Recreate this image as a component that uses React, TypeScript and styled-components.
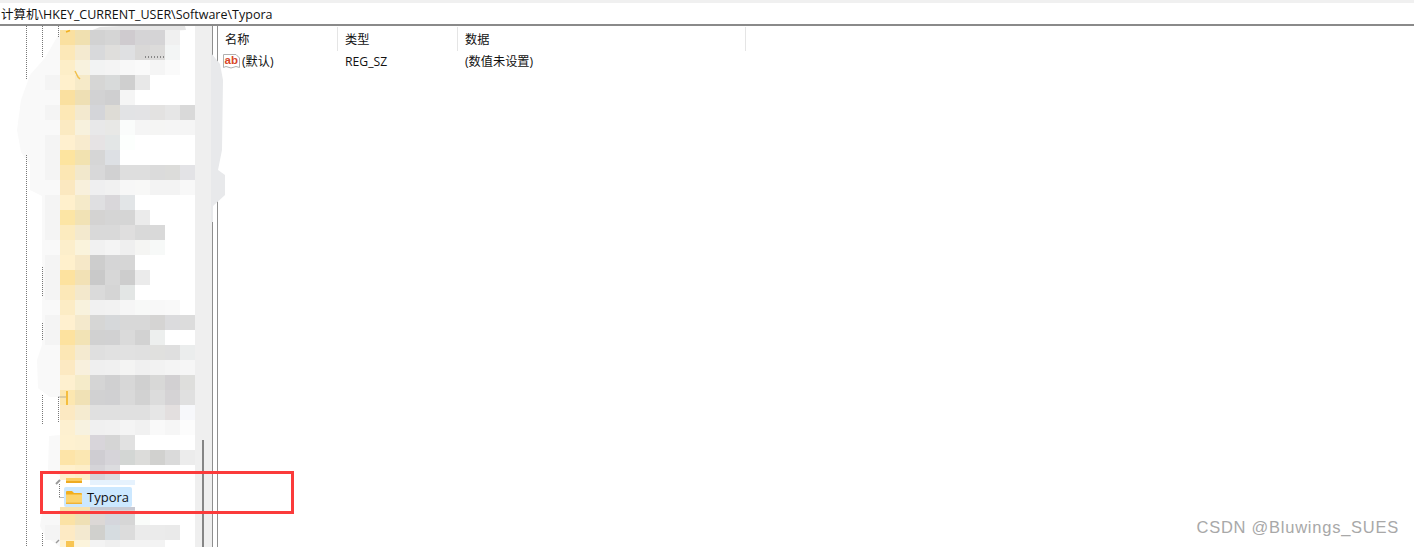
import React from "react";
import styled, { createGlobalStyle } from "styled-components";

const UI_FONT = `"Open Sans", "Noto Sans CJK SC", "Liberation Sans", sans-serif`;

const GlobalStyle = createGlobalStyle`
  html, body { margin: 0; padding: 0; background: #fff; }
  #root { width: 1414px; height: 547px; overflow: hidden; }
`;

const Page = styled.div`
  position: relative;
  display: flex;
  flex-direction: column;
  width: 1414px;
  height: 547px;
  overflow: hidden;
  background: #fff;
  font-family: ${UI_FONT};
  color: #111;
`;

const TopStrip = styled.div`
  flex: 0 0 3px;
  background: #f0f0f0;
`;

const AddressBar = styled.div`
  flex: 0 0 23px;
  box-sizing: border-box;
  display: flex;
  align-items: center;
  padding-left: 1px;
  font-size: 12.5px;
  white-space: nowrap;
  border-bottom: 2px solid #8a8a8a;
`;

const Body = styled.div`
  flex: 1;
  display: flex;
  min-height: 0;
`;

const TreePane = styled.div`
  position: relative;
  z-index: 1;
  flex: 0 0 212px;
  width: 212px;
  min-width: 0;
  background: #fff;
`;

const MosaicDrawing = styled.svg`
  display: block;
  overflow: visible;
`;

const TreeSelection = styled.div`
  position: absolute;
  left: 64px;
  top: 461px;
  width: 68px;
  height: 20px;
  display: flex;
  align-items: center;
  gap: 5px;
  padding-left: 2px;
  box-sizing: border-box;
  background: #cce8ff;
  border-radius: 2px;
  font-size: 13px;
  line-height: 18px;
`;

const SelectionLabel = styled.span`
  margin-top: -1px;
`;

const Splitter = styled.div`
  flex: 0 0 6px;
  box-sizing: border-box;
  border-left: 1.5px solid #8f8f8f;
  border-right: 1.5px solid #8f8f8f;
`;

const ListPane = styled.div`
  flex: 1;
  min-width: 0;
  font-size: 12.2px;
`;

const ColumnsGrid = styled.div`
  display: grid;
  grid-template-columns: 120px 120px 288px;
  justify-content: start;
`;

const HeaderCell = styled.div`
  height: 24px;
  margin-top: 1px;
  padding-left: 7px;
  display: flex;
  align-items: center;
  box-sizing: border-box;
  border-right: 1px solid #e5e5e5;
`;

const DataCell = styled.div<{ $tight?: boolean }>`
  height: 20px;
  display: flex;
  align-items: center;
  gap: 2px;
  padding-left: ${(p) => (p.$tight ? 5 : 7)}px;
`;

const RedBox = styled.div`
  position: absolute;
  left: 40px;
  top: 471px;
  width: 254px;
  height: 43px;
  box-sizing: border-box;
  border: 3px solid #fb3b3b;
  z-index: 2;
`;

const Watermark = styled.div`
  position: absolute;
  right: 15px;
  top: 518px;
  font-family: "Liberation Sans", sans-serif;
  font-size: 16.5px;
  letter-spacing: 0.75px;
  line-height: 18px;
  color: #a8a8a8;
  white-space: nowrap;
  z-index: 2;
`;

type MosaicRow = [number, string[]];

const ROWS: MosaicRow[] = [
  [30, ["#fae0a0","#f0e0b0","#d2d2d2","#d5d5d5","#cfcbcf","#d5d4d6","#d5d4d6","#f0f0f0"]],
  [45, ["#fce8b8","#f4ead0","#d8d9db","#dfdedc","#dfe0e2","#d9d8d7","#dcdbda","#f3f5f5"]],
  [60, ["#fdeec8","#f8f2de","#f2f3f3","#f4f4f4","#f8f8f8","#fafafa","#f5f5f5","#fafafa"]],
  [75, ["#fff0cc","#f6eac8","#d6d6d5","#d8dada","#cfcfcf","#e8e8e8"]],
  [90, ["#fae0a0","#eedfb4","#d2d2d3","#cfcfd0","#f5f5f5"]],
  [105, ["#fde8b6","#f3e9cf","#d4d5d9","#dedcd6","#e2e3e5","#e3e3e5","#e3e2e1","#e6e6e6","#d9d9d9"]],
  [120, ["#fbeac2","#f7f1dd","#e8e8e9","#e8e8e6","#fafcfb","#f5f5f5","#f5f5f4","#f5f5f5","#f5f5f5"]],
  [135, ["#fff0cf","#f8ebce","#e6e3e4","#e3e6e6","#fcfffd"]],
  [150, ["#fde49f","#f2e2b0","#d6d6d6","#dde0e4"]],
  [165, ["#fce7b4","#f2e8cc","#d8d8d9","#d1d1d2","#dedede","#dedede","#dbdbdb","#dcdcda","#e3e3e6"]],
  [180, ["#fbe8c0","#f8f0dc","#efeff0","#f1f1f1","#f7f7f7","#f8f8f7","#f3f3f3","#f3f3f3","#f8f8f8"]],
  [195, ["#fff0cc","#f5eac9","#dfdfe1","#d9d7da","#e2e5e7"]],
  [210, ["#fce5a5","#f1e2b5","#d4d3d2","#d5d5d5","#d5d5d5","#ebebeb"]],
  [225, ["#fcebbf","#f3e9ce","#d9d9d9","#d9d9d9","#dfdede","#d9d9d9","#d9d9d9"]],
  [240, ["#fceecb","#faf3dc","#f1f1f1","#f4f4f4","#efefef","#f5f5f3","#f7f9f8"]],
  [255, ["#fff0cc","#f6e8c8","#cdcdcd","#d5d5d6","#d6d6d6"]],
  [270, ["#fde29f","#f2e1b5","#c9c9c9","#d7d7d7","#cdcdcd","#ebebeb"]],
  [285, ["#fce8b8","#f3e8cc","#dadada","#d5d5d5","#e3e6e5"]],
  [300, ["#fcecc5","#f8f2dd","#f1f1f1","#f2f2f2","#f6f6f6","#f8f9f8","#f8f8f8","#f9f9f9"]],
  [315, ["#fff0cf","#f4e9cc","#d6d6d5","#d6d8da","#d8d8d8","#d8d8d8","#d5d4d3","#dbdbdd","#dcdcdc"]],
  [330, ["#fde29f","#f2e3b5","#d1d1d1","#d1d1d2","#dadada","#d2d2d2","#edefee"]],
  [345, ["#fce7b5","#f4ead0","#dfdfdf","#e1e1e1","#e1e1e1","#e0e0e0","#e0e0de","#dfdfdf","#ebeded"]],
  [360, ["#fce9c2","#f8f0dd","#efefef","#f0f0f0","#f4f4f3","#f0f0f0","#f2f2f2","#f4f4f4","#f6f6f6"]],
  [375, ["#fef0cf","#f5ebc9","#d5d5d5","#d0d0d1","#d7d7d7","#d0d0d0","#d8d8d7","#d2d0d2","#dededc"]],
  [390, ["#fce7b0","#f0e1b5","#d1d1d2","#d0d0d2","#d9d9d9","#d2d2d2","#dcdcdc","#d5d3d5","#e0e0e0"]],
  [405, ["#fce9c2","#f5ebd0","#e0e0e0","#e0e0e0","#e0e0e0","#e0e0e0","#e6e6e6","#e3dfdf","#f7f8fb"]],
  [420, ["#fdf0d0","#f7f2e0","#f0f0f0","#f1f1f1","#f4f4f4","#f1f1f1","#f9f9f9","#f6f6f6","#fcfcfc"]],
  [435, ["#fef1d0","#fcf0d0","#d8d5da","#d5d5d5","#e1e1e1"]],
  [450, ["#fde4a8","#fbe7b2","#cfcdd2","#d6d4d9","#d3d6d4","#dcdcda","#d1d1cf","#dadada","#ececec"]],
  [465, ["#fff0cc","#fdeec8","#d5d4d8","#dcdcdf"]],
  [510, ["#fbe2a5","#efe0b5","#dcd8d6","#d5d6dc","#d6d6d6","#fafcfa"]],
  [525, ["#fdeac4","#f3e9d0","#d0d0cd","#d6dce0","#dcdcdc","#ebebeb","#ebebeb","#eaeaea"]],
  [540, ["#fff2d0","#fcf4dc","#f3f3f3","#efefef","#f3f3f3","#f3f3f3","#f3f3f3"]],
];

const LEFT_CELLS = [75, 105, 135, 150, 165, 195, 210, 225, 255, 270, 285, 315, 330, 525];

const DOTTED: [number, number, number, number][] = [
  [26.5, 26, 26.5, 80],
  [26.5, 155, 26.5, 547],
  [42.5, 26, 42.5, 58],
  [42.5, 267, 42.5, 296],
  [42.5, 323, 42.5, 340],
  [42.5, 395, 42.5, 425],
  [42.5, 533, 42.5, 547],
  [58.5, 26, 58.5, 38],
  [58.5, 397, 58.5, 422],
  [58.5, 397, 66, 397],
  [59.5, 484, 59.5, 497],
  [59.5, 497.5, 65, 497.5],
];

const Mosaic = () => (
  <MosaicDrawing width="232" height="521" viewBox="0 26 232 521">
    <rect x="195" y="26" width="17" height="521" fill="#efefef" />
    <path d="M60 32 L45 58 L30 75 L21 100 L17 130 L21 152 L30 165 L30 190 L42 196 L42 345 L37 360 L38 388 L50 397 L60 397 L60 435 L49 436 L48 470 L60 476 Z" fill="#f9f9f9" />
    <path d="M60 510 L42 514 L40 526 L45 536 L60 547 Z" fill="#f8f8f8" />
    <path d="M90 31 L100 27 L120 26 L185 26 L186 30 L165 31 L90 31 Z" fill="#e6e6e6" />
    <path d="M211 53 L220 64 L223 80 L222 150 L218 170 L225 175 L225 195 L213 206 L213 222 L211 222 Z" fill="#e8e9eb" />
    {LEFT_CELLS.map((y) => (
      <rect key={y} x="45" y={y} width="15" height="15" fill="#f4f4f4" />
    ))}
    {ROWS.map(([y, colours]) =>
      colours.map((c, i) => (
        <rect key={`${y}-${i}`} x={60 + i * 15} y={y} width="15" height="15" fill={c} />
      ))
    )}
    <rect x="60" y="507" width="30" height="3" fill="#f8e2ae" />
    <rect x="90" y="507" width="45" height="3" fill="#c8c9d2" />
    <rect x="90" y="480" width="45" height="5" fill="#e6f2fd" />
    <rect x="60" y="480" width="30" height="5" fill="#ffffff" />
    <rect x="66" y="478" width="16" height="5" fill="#fbcd62" />
    <rect x="66" y="481" width="16" height="2" fill="#eeab22" />
    <path d="M56 484 L60 480" stroke="#9a9a9a" strokeWidth="2" />
    <path d="M66 32 L70 30.5" stroke="#f2b01e" strokeWidth="1.5" />
    <path d="M75 71 L78 77 L80 79" stroke="#f2c04c" strokeWidth="1.5" fill="none" />
    <rect x="66" y="391" width="2" height="14" fill="#f5be3f" />
    <rect x="66" y="541" width="8" height="6" fill="#f8c553" />
    <path d="M56 543 L59 540" stroke="#9a9a9a" strokeWidth="1.5" />
    <path d="M145 57 H166" stroke="#333" strokeWidth="1" strokeDasharray="1 2" />
    <rect x="202" y="440" width="2" height="107" fill="#858585" />
    {DOTTED.map(([x1, y1, x2, y2], i) => (
      <line key={i} x1={x1} y1={y1} x2={x2} y2={y2} stroke="#777" strokeWidth="1" strokeDasharray="1 1" />
    ))}
  </MosaicDrawing>
);

const FolderIcon = () => (
  <svg width="16" height="15" viewBox="0 0 16 15">
    <path d="M0 2 Q0 1 1 1 H6 L8 3 H15 Q16 3 16 4 V6 H0 Z" fill="#f2ae1c" />
    <path d="M0 4.5 H16 V13 Q16 14 15 14 H1 Q0 14 0 13 Z" fill="#fcd46e" />
    <rect x="0" y="12.6" width="16" height="1.4" fill="#f0b236" />
  </svg>
);

const ValueIcon = () => (
  <svg width="17" height="16" viewBox="0 0 17 16">
    <path d="M0.5 1.5 H13 L16.5 5 V14.5 L13 13.5 L8 15 L3 13.5 L0.5 14.5 Z" fill="#fff" stroke="#b0b0b0" />
    <text x="1.5" y="11" fontFamily="'Liberation Sans', sans-serif" fontWeight="700" fontSize="11.5" fill="#d8482a">ab</text>
  </svg>
);

export default function App() {
  return (
    <Page>
      <GlobalStyle />
      <TopStrip />
      <AddressBar>计算机\HKEY_CURRENT_USER\Software\Typora</AddressBar>
      <Body>
        <TreePane>
          <Mosaic />
          <TreeSelection>
            <FolderIcon />
            <SelectionLabel>Typora</SelectionLabel>
          </TreeSelection>
        </TreePane>
        <Splitter />
        <ListPane>
          <ColumnsGrid>
            <HeaderCell>名称</HeaderCell>
            <HeaderCell>类型</HeaderCell>
            <HeaderCell>数据</HeaderCell>
            <DataCell $tight>
              <ValueIcon />
              <span>(默认)</span>
            </DataCell>
            <DataCell>REG_SZ</DataCell>
            <DataCell>(数值未设置)</DataCell>
          </ColumnsGrid>
        </ListPane>
      </Body>
      <RedBox />
      <Watermark>CSDN @Bluwings_SUES</Watermark>
    </Page>
  );
}
